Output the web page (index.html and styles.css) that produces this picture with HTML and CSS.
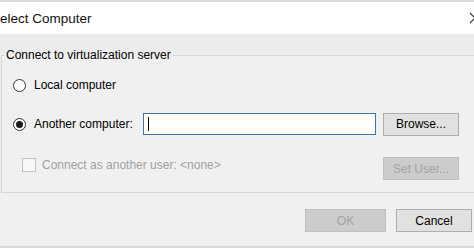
FILE: index.html
```html
<!DOCTYPE html>
<html lang="en">
  <head>
    <meta charset="UTF-8" />
    <meta name="viewport" content="width=device-width, initial-scale=1.0" />
    <title>Select Computer</title>
    <link rel="stylesheet" href="styles.css">
  </head>
  <body>
    <div class="window">
      <div class="top-strip"></div>

      <!-- Title bar -->
      <div class="titlebar">
        <span class="title">Select Computer</span>
        <svg class="close" width="12" height="12" viewBox="0 0 12 12">
          <path d="M1 1 L11 11 M11 1 L1 11" stroke="#2b2b2b" stroke-width="1.1" fill="none" />
        </svg>
      </div>

      <div class="dialog">
        <!-- Group: server -->
        <fieldset class="group">
          <legend>Connect to virtualization server</legend>
          <div class="group-body">
            <div class="row">
              <label class="opt">
                <input type="radio" name="target" />
                <span>Local computer</span>
              </label>
            </div>

            <div class="row row-gap1">
              <label class="opt opt-fixed">
                <input type="radio" name="target" checked />
                <span>Another computer:</span>
              </label>
              <div class="field"><span class="caret"></span></div>
              <button class="btn">Browse...</button>
            </div>

            <div class="row row-user">
              <label class="check">
                <input type="checkbox" disabled />
                <span>Connect as another user: &lt;none&gt;</span>
              </label>
              <button class="btn" disabled>Set User...</button>
            </div>
          </div>
        </fieldset>

        <!-- Dialog buttons -->
        <div class="footer">
          <button class="btn btn-wide" disabled>OK</button>
          <button class="btn btn-cancel">Cancel</button>
        </div>
      </div>

      <div class="bottom-strip"></div>
    </div>
  </body>
</html>
```

FILE: styles.css
```css
body {
  margin: 0;
  font-family: "Liberation Sans", Arial, sans-serif;
  font-size: 12px;
  color: #000;
  background-color: #f0f0f0;
}
.window {
  width: 474px;
  height: 248px;
  overflow: hidden;
  background-color: #ececec;
}
.top-strip {
  height: 2px;
  background-color: #d9d9d9;
}
.titlebar {
  height: 32px;
  background-color: #fff;
  display: flex;
  align-items: center;
  justify-content: space-between;
  overflow: hidden;
}
.title {
  font-size: 13.5px;
  margin-left: -9px;
  color: #111;
}
.close {
  margin-right: -7px;
  flex: none;
}
.dialog {
  padding-top: 14px;
}
.group {
  margin: 0 0 0 1px;
  padding: 0;
  border: 1px solid #d6d6d6;
  border-right: none;
  background-color: #f0f0f0;
}
.group legend {
  margin-left: 2px;
  padding: 0 2px;
  line-height: 14px;
  font-size: 12px;
}
.group-body {
  padding: 12px 15px 12px 10px;
}
.row {
  display: flex;
  align-items: center;
  height: 22px;
}
.row-gap1 {
  margin-top: 17px;
}
.row-user {
  margin-top: 22px;
  height: 23px;
  align-items: flex-start;
  justify-content: space-between;
}
.opt {
  display: flex;
  align-items: center;
  gap: 8px;
}
.opt-fixed {
  flex: 0 0 131px;
}
.opt input {
  appearance: none;
  margin: 0 0 0 1px;
  width: 13px;
  height: 13px;
  border: 1px solid #333;
  border-radius: 50%;
  background-color: #fff;
  display: grid;
  place-items: center;
}
.opt input:checked::after {
  content: "";
  width: 7px;
  height: 7px;
  border-radius: 50%;
  background-color: #1a1a1a;
}
.field {
  width: 233px;
  height: 22px;
  box-sizing: border-box;
  border: 1px solid #3a77a8;
  background-color: #fffffc;
  display: flex;
  align-items: center;
  padding-left: 4px;
}
.caret {
  width: 1px;
  height: 14px;
  background-color: #000;
}
.btn {
  font-family: inherit;
  font-size: 12px;
  height: 23px;
  width: 76px;
  margin-left: 7px;
  padding: 0;
  background-color: #e1e1e1;
  border: 1px solid #adadad;
  color: #000;
}
.btn:disabled {
  background-color: #cccccc;
  border-color: #bfbfbf;
  color: #a3a3a3;
}
.check {
  display: flex;
  align-items: center;
  gap: 6px;
  margin-left: 10px;
  margin-top: 1px;
  color: #a0a0a0;
}
.check input {
  appearance: none;
  margin: 0;
  width: 14px;
  height: 14px;
  border: 1px solid #c2c2c2;
  background-color: #f7f7f7;
}
.footer {
  height: 53px;
  box-sizing: border-box;
  padding: 16px 2px 0 0;
  display: flex;
  justify-content: flex-end;
  align-items: flex-start;
  background-color: #f0f0f0;
}
.footer .btn {
  margin-left: 10px;
}
.btn-wide {
  width: 81px;
}
.btn-cancel {
  width: 76px;
}
.bottom-strip {
  height: 2px;
  background-color: #d9d9d9;
}
```
